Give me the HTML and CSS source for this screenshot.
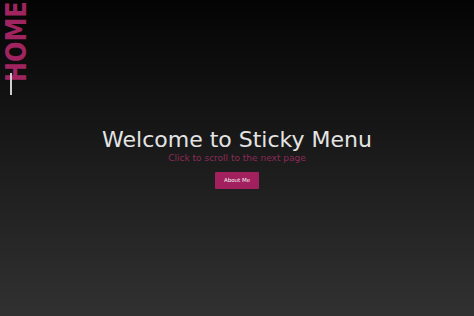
FILE: index.html
```html
<!DOCTYPE html>
<html lang="en">
<head>
<meta charset="utf-8">
<title>Sticky Menu</title>
<link rel="stylesheet" href="styles.css">
</head>
<body>
<nav class="side-nav">
  <span class="side-label">HOME</span>
  <span class="side-line"></span>
</nav>
<main class="hero">
  <h1 class="hero-title">Welcome to Sticky Menu</h1>
  <p class="hero-sub">Click to scroll to the next page</p>
  <a class="hero-btn" href="#about">About Me</a>
</main>
</body>
</html>
```
FILE: styles.css
```css
html, body {
  margin: 0;
  padding: 0;
  height: 100%;
}
body {
  background: linear-gradient(to bottom, #040404 0%, #1b1b1b 50%, #313131 100%);
  font-family: "DejaVu Sans", Verdana, sans-serif;
  overflow: hidden;
  position: relative;
}
.hero {
  height: 100%;
  display: flex;
  flex-direction: column;
  align-items: center;
  justify-content: center;
}
.hero-title {
  margin: 0;
  font-size: 22px;
  font-weight: normal;
  line-height: 25.6px;
  color: #e4e4e4;
}
.hero-sub {
  margin: 0;
  font-size: 9px;
  line-height: 10.5px;
  color: #8c2a58;
}
.hero-btn {
  margin-top: 8px;
  display: flex;
  align-items: center;
  justify-content: center;
  width: 44px;
  height: 17px;
  background: #a2205e;
  color: #f4f4f4;
  font-size: 5.5px;
  text-decoration: none;
  border-radius: 1px;
}
.side-label {
  position: absolute;
  left: 1.6px;
  top: 82px;
  transform-origin: top left;
  transform: rotate(-90deg) scaleY(1.2);
  font-family: "DejaVu Sans", Verdana, sans-serif;
  font-weight: bold;
  font-size: 24px;
  line-height: 24px;
  color: #a02460;
  white-space: nowrap;
}
.side-line {
  position: absolute;
  left: 10px;
  top: 73px;
  width: 1.5px;
  height: 22px;
  background: #cfcfcf;
}
```
